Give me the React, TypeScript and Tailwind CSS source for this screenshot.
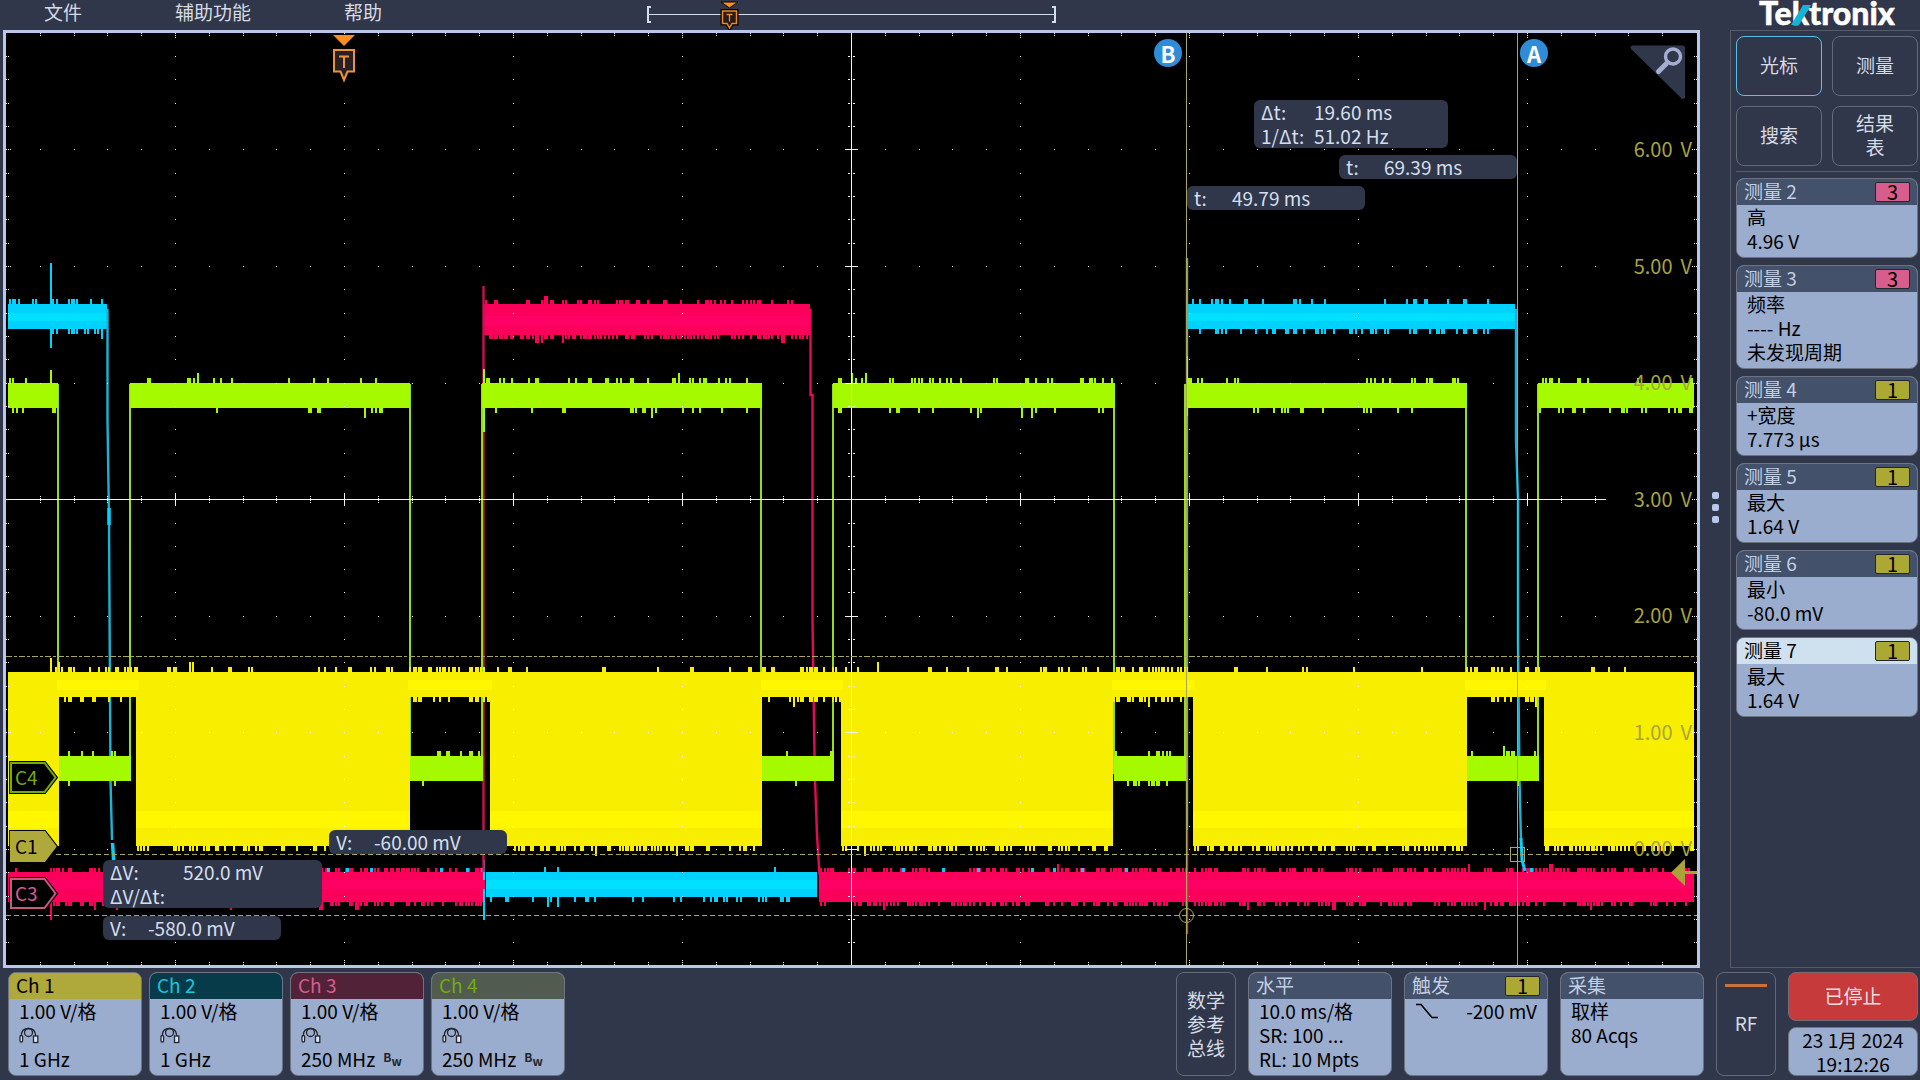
import type { CSSProperties, ReactNode } from "react";

/* ---------- plot geometry: view box shared by the drawing and its overlays ---------- */
const VX = 6;
const VY = 33;
const VW = 1691;
const VH = 932;

const at = (x: number, y: number): CSSProperties => ({
  left: `${((x - VX) / VW) * 100}%`,
  top: `${((y - VY) / VH) * 100}%`,
});

/* Small deterministic generator, so the noise is stable between renders. */
function rng(seed: number) {
  let s = seed * 7919 + 17;
  return () => {
    s = (s * 1103515245 + 12345) % 2147483648;
    return s / 2147483648;
  };
}

/* A noisy trace band: a filled strip with short spikes on both sides. */
function band(x0: number, x1: number, top: number, bottom: number, seed: number, up: number, down: number, spike = 5) {
  const r = rng(seed);
  let d = `M${x0} ${top}H${x1}V${bottom}H${x0}Z`;
  let x = x0 + 1;
  while (x < x1 - 3) {
    const w = r() < 0.7 ? 2 : 4;
    if (r() < up) {
      const h = r() < 0.03 ? spike * 2 : spike;
      d += `M${x} ${top - h}h${w}v${h}h${-w}z`;
    }
    if (r() < down) {
      const h = r() < 0.04 ? spike * 2 : spike;
      d += `M${x} ${bottom}h${w}v${h}h${-w}z`;
    }
    x += w + (r() < 0.5 ? 1 : 2);
  }
  return d;
}

function graticule() {
  const dot = (x: number, y: number, w = 1, h = 1) => `M${x} ${y}h${w}v${h}h${-w}z`;
  let d = "";
  for (let i = 1; i < 50; i++) {
    const x = Math.round(6 + 33.8 * i);
    const major = i % 5 === 0;
    for (const o of major ? [0, 2, 4] : [0, 2]) d += dot(x, 33 + o) + dot(x, 964 - o);
    if (x > 1606) continue;
    for (let j = 1; j < 8; j++) d += dot(x, Math.round(32.8 + 116.6 * j));
    d += major ? dot(x, 493, 1, 13) : dot(x, 496) + dot(x, 498) + dot(x, 500) + dot(x, 502);
  }
  for (let j = 1; j < 40; j++) {
    const y = Math.round(32.8 + 23.32 * j);
    const major = j % 5 === 0;
    for (let i = 1; i < 10; i++) d += dot(6 + 169 * i, y);
    d += major ? dot(845, y, 13) : dot(848, y, 2) + dot(853, y, 2);
    for (const o of major ? [0, 2, 4] : [0, 2]) d += dot(6 + o, y) + dot(1696 - o, y);
  }
  return d;
}

const highC4 = [[8, 58], [130, 410], [482, 762], [833, 1115], [1187, 1467], [1538, 1694]];
const lowC4 = [[59, 131], [410, 483], [762, 834], [1114, 1186], [1467, 1539]];
const edgesC4 = [58, 130, 410, 482, 761, 833, 1114, 1185, 1466, 1538];
const burstsC1 = [[8, 59], [136, 410], [490, 762], [841, 1113], [1193, 1467], [1544, 1694]];
const gapsC1 = [[57, 139], [408, 492], [761, 843], [1112, 1195], [1465, 1546]];
const specks = [327, 346, 370, 440, 466, 481, 902, 942, 977, 1031, 1053, 1081, 1125, 1530];

function Waveforms() {
  return (
    <svg
      className="absolute inset-0 h-full w-full"
      viewBox={`${VX} ${VY} ${VW} ${VH}`}
      preserveAspectRatio="none"
      aria-label="波形"
    >
      <g shapeRendering="crispEdges">
        {/* channel 3 */}
        <g fill="#fb005b">
          <path d={band(484, 810, 304, 335, 3, 0.45, 0.75, 4)} />
          <path d={band(8, 485, 872, 902, 4, 0.6, 0.65, 4)} />
          <path d={band(819, 1694, 872, 902, 5, 0.6, 0.6, 4)} />
          <path d="M50 900h2v20h-2z" />
        </g>
        {/* channel 2 */}
        <g fill="#00d2fd">
          <path d={band(8, 107, 304, 329, 1, 0.35, 0.25)} />
          <path d={band(1188, 1515, 304, 329, 2, 0.2, 0.35)} />
          <path d={band(486, 817, 872, 897, 6, 0.08, 0.3)} />
          <path d="M50 263h2v85h-2zM483 860h2v60h-2z" />
          {specks.map((x) => (
            <rect key={x} x={x} y={868} width={3} height={4} />
          ))}
        </g>
        <g fill="#00e0ff">
          <path d="M8 313h99v8H8zM1188 313h327v8h-327zM486 880h331v9H486z" />
        </g>
        <g fill="#ff0064">
          <path d="M485 316h325v10H485zM8 880h477v9H8zM819 880h875v9H819z" />
        </g>
      </g>
      {/* channel 2 and 3 transitions */}
      <g fill="none" strokeWidth={2.4}>
        <path stroke="#18b4d6" d="M107.500 309V420L109 520L110.500 780L112 840" />
        <path stroke="#00d2fd" strokeWidth={3.5} d="M112.500 843L114 866M109 508V525" />
        <path stroke="#18b4d6" d="M1516 309V440L1518 500V640L1519.500 780L1521 840" />
        <path stroke="#00d2fd" strokeWidth={3} d="M1521 838L1522 860L1525 871" />
        <path stroke="#c9114f" d="M483.500 286V872" />
        <path stroke="#e40a57" d="M810.500 309V395L812.500 395V620L814 725L815 780L817 835L819.500 875" />
        <path stroke="#4fb59a" d="M1187 258V830" />
        <path stroke="#cf3a45" d="M1187 830V934" />
      </g>
      <g shapeRendering="crispEdges">
        {/* channel 4 */}
        <g fill="#95dc1c">
          {edgesC4.map((x) => (
            <rect key={x} x={x - 1} y={384} width={2} height={390} />
          ))}
        </g>
        <g fill="#a6fa00">
          {highC4.map(([a, b], i) => (
            <path key={a} d={band(a, b, 383, 408, 20 + i, 0.25, 0.2)} />
          ))}
          {lowC4.map(([a, b], i) => (
            <path key={a} d={band(a, b, 756, 781, 30 + i, 0.3, 0.15)} />
          ))}
          <path d="M50 370h2v14h-2zM483 369h2v63h-2zM1186 356h2v60h-2z" />
        </g>
        {/* channel 1 */}
        <g fill="#f8ef00">
          {burstsC1.map(([a, b], i) => (
            <path key={a} d={band(a, b, 672, 846, 40 + i, 0.15, 0.6)} />
          ))}
          {gapsC1.map(([a, b], i) => (
            <path key={a} d={band(a, b, 672, 697, 50 + i, 0.6, 0.5)} />
          ))}
          <path d="M50 658h2v14h-2z" />
        </g>
        <g fill="#fff700">
          {gapsC1.map(([a, b]) => (
            <rect key={a} x={a} y={680} width={b - a} height={10} />
          ))}
          {burstsC1.map(([a, b]) => (
            <rect key={a} x={a} y={811} width={b - a} height={17} />
          ))}
        </g>
        {/* graticule */}
        <path fill="#f3f3f3" d={graticule()} />
        <path fill="#f3f3f3" d="M851 33h1v932h-1zM6 499h1600v1H6z" />
        {/* measurement and cursor lines */}
        <g stroke="#aaa560" strokeWidth={1} fill="none">
          <path strokeDasharray="6 2 3 2" d="M6 656.500H1697" />
          <path strokeDasharray="5 3" d="M56 854.500H1604" />
          <path strokeDasharray="5 3" d="M6 915.500H1697" />
          <path d="M1186.500 33V965M1517.500 33V965" />
          <path d="M1510.500 847.500h14v14h-14z" />
        </g>
      </g>
      <circle cx={1186.500} cy={915.500} r={7} fill="none" stroke="#aaa560" />
      {/* trigger level arrow */}
      <path fill="#aaa238" d="M1671 872.500L1685 859V871H1697V874H1685V886Z" />
      {/* trigger position */}
      <path fill="#f88d23" d="M333 35H355L344 46Z" />
      <path fill="#261f24" stroke="#ea9338" strokeWidth={2} d="M334 50H354V71.500H347.500L344 80L340.500 71.500H334Z" />
      <path fill="none" stroke="#ea9338" strokeWidth={2} d="M339 56.500H349M344 56V68" />
      {/* zoom corner */}
      <path fill="#31374a" stroke="#31374a" strokeWidth={4} strokeLinejoin="round" d="M1632.500 47.500H1683V97Z" />
      <circle cx={1673} cy={56.500} r={7.500} fill="none" stroke="#a3aed2" strokeWidth={3.400} />
      <path stroke="#a3aed2" strokeWidth={5} strokeLinecap="round" d="M1666.500 63.500L1658.500 71.500" />
    </svg>
  );
}

/* ---------- overlays ---------- */
function Readout({ x, y, className, children }: { x: number; y: number; className: string; children: ReactNode }) {
  return (
    <div
      className={`absolute rounded-md bg-[#31374a] px-[7px] text-[19px] leading-6 whitespace-nowrap text-[#d3dfee] ${className}`}
      style={at(x, y)}
    >
      {children}
    </div>
  );
}

function Row({ label, value, w = "w-[38px]" }: { label: string; value: string; w?: string }) {
  return (
    <div className="flex">
      <span className={w}>{label}</span>
      <span>{value}</span>
    </div>
  );
}

function CursorBadge({ x, name }: { x: number; name: string }) {
  return (
    <button
      className="absolute flex size-7 items-center justify-center rounded-full bg-[#2f8dd8] text-[22px] leading-7 font-bold text-white"
      style={at(x, 39)}
    >
      {name}
    </button>
  );
}

function Handle({ y, name, fill, stroke, color }: { y: number; name: string; fill: string; stroke: string; color: string }) {
  return (
    <div className="absolute flex h-8 w-12 items-center pl-[6px] text-[19px]" style={at(9, y)}>
      <svg className="absolute inset-0" width="49" height="33" viewBox="0 0 49 33" aria-hidden="true">
        <path d="M1 1H36L48 16.500L36 32H1Z" fill={fill} stroke="#000" strokeWidth="2" />
        <path d="M2 2H35.500L46.500 16.500L35.500 31H2Z" fill={fill} stroke={stroke} strokeWidth="2" />
      </svg>
      <span className={`relative leading-8 ${color}`}>{name}</span>
    </div>
  );
}

const axis = [
  { v: "6.00", y: 149 },
  { v: "5.00", y: 266 },
  { v: "4.00", y: 382 },
  { v: "3.00", y: 499 },
  { v: "2.00", y: 615 },
  { v: "1.00", y: 732 },
  { v: "0.00", y: 848 },
];

/* ---------- side panel ---------- */
function PanelButton({ children, active }: { children: ReactNode; active?: boolean }) {
  return (
    <button
      className={`flex h-[60px] items-center justify-center rounded-lg border pb-0.5 text-[19px] leading-6 text-[#d6dbe4] ${
        active ? "border-[#5cbfe6]" : "border-[#646a74]"
      }`}
    >
      {children}
    </button>
  );
}

function Source({ n }: { n: number }) {
  return (
    <span
      className={`flex h-5 w-[35px] items-center justify-center rounded-xs border border-[#23262e] text-xl leading-5 text-black ${
        n === 3 ? "bg-[#d75d8c]" : "bg-[#aba933]"
      }`}
    >
      {n}
    </span>
  );
}

const measurements = [
  { title: "测量 2", src: 3, lines: ["高", "4.96 V"] },
  { title: "测量 3", src: 3, lines: ["频率", "---- Hz", "未发现周期"] },
  { title: "测量 4", src: 1, lines: ["+宽度", "7.773 µs"] },
  { title: "测量 5", src: 1, lines: ["最大", "1.64 V"] },
  { title: "测量 6", src: 1, lines: ["最小", "-80.0 mV"] },
  { title: "测量 7", src: 1, lines: ["最大", "1.64 V"], selected: true },
];

function Measurement({ title, src, lines, selected }: { title: string; src: number; lines: string[]; selected?: boolean }) {
  return (
    <button className="block w-full overflow-hidden rounded-lg border border-[#6d747f] bg-[#9badce] text-left text-[19px] text-black">
      <span
        className={`flex h-[26px] items-start justify-between px-[7px] leading-6 ${
          selected ? "bg-[#cfe0ef] text-black" : "bg-[#44516a] text-[#c3cfe4]"
        }`}
      >
        {title}
        <span className="pt-[3px]">
          <Source n={src} />
        </span>
      </span>
      <span className="block pb-1 pl-2.5">
        {lines.map((l) => (
          <span key={l} className="block leading-6">
            {l}
          </span>
        ))}
      </span>
    </button>
  );
}

/* ---------- bottom bar ---------- */
function ProbeIcon() {
  return (
    <svg width="20" height="17" viewBox="0 0 20 17" fill="none" stroke="#23262e" strokeWidth="1.300" aria-hidden="true">
      <rect x="1" y="8.500" width="2.600" height="6.500" rx="1.300" fill="#dfe6f2" />
      <path d="M2.300 8.500C2.300 3 5 1.500 9.500 1.500S16.500 3.500 16.700 9" />
      <circle cx="9.500" cy="5.500" r="4" />
      <rect x="14.500" y="9" width="4.300" height="6.500" fill="#dfe6f2" />
    </svg>
  );
}

const channels = [
  { name: "Ch 1", head: "bg-[#aea93a] text-black", bw: "1 GHz", limit: false },
  { name: "Ch 2", head: "bg-[#083b49] text-[#1ec3de]", bw: "1 GHz", limit: false },
  { name: "Ch 3", head: "bg-[#522338] text-[#d75d8c]", bw: "250 MHz", limit: true },
  { name: "Ch 4", head: "bg-[#515b50] text-[#74ac10]", bw: "250 MHz", limit: true },
];

function Card({ width, head, headClass, children }: { width: string; head: ReactNode; headClass: string; children: ReactNode }) {
  return (
    <button
      className={`flex flex-col overflow-hidden rounded-lg border border-[#6d747f] bg-[#9badce] text-left text-[19px] text-black ${width}`}
    >
      <span className={`flex h-[26px] w-full shrink-0 items-start justify-between px-[7px] leading-6 ${headClass}`}>{head}</span>
      <span className="block w-full pr-2.5 pl-[10px] leading-6 whitespace-nowrap">{children}</span>
    </button>
  );
}

const blueHead = "bg-[#44516a] text-[#c3cfe4]";

export default function App() {
  return (
    <div className="flex min-h-screen flex-col overflow-hidden bg-[#31374a] font-['Noto_Sans_CJK_SC',sans-serif]">
      <header className="flex h-[30px] shrink-0 items-start text-[19px] leading-6 text-[#d6dbe4]">
        <nav className="flex gap-[93px] pl-11">
          <button>文件</button>
          <button>辅助功能</button>
          <button>帮助</button>
        </nav>
        <svg className="ml-[265px]" width="410" height="30" viewBox="0 0 410 30" fill="none" aria-label="采集预览">
          <g shapeRendering="crispEdges" fill="#cfe0ef">
            <path d="M0 6h4v2H2v13h2v2H0zM409 6h-4v2h2v13h-2v2h4z" />
            <path d="M2 14h405v1H2z" />
          </g>
          <path d="M74 2H91L82.500 8Z" fill="#f88d23" stroke="#000" />
          <path d="M75.500 11H89.500V23.500H85L82.500 28L80 23.500H75.500Z" fill="#2b1a16" stroke="#000" strokeWidth="4" />
          <path d="M75.500 11H89.500V23.500H85L82.500 28L80 23.500H75.500Z" fill="#2b1a16" stroke="#ea8a2c" strokeWidth="1.500" />
          <path d="M79.500 14.500H85.500M82.500 14.500V21.500" stroke="#ea8a2c" strokeWidth="1.300" />
        </svg>
        <svg className="mr-5 ml-auto" width="142" height="30" viewBox="0 0 142 30" aria-label="Tektronix">
          <text x="1" y="25" fill="#fff" stroke="#fff" strokeWidth="0.500" fontSize="32" fontWeight="900" fontFamily="Lato">
            Tektronix
          </text>
          <path d="M45 5H53L41 25H33Z" fill="#16b3d8" />
        </svg>
      </header>

      <main className="flex flex-1">
        <section className="relative ml-[3px] flex-1 border-[3px] border-[#b9c8ea] bg-black" aria-label="示波器显示">
          <div className="absolute inset-0 overflow-hidden">
            <Waveforms />
            <div className="text-xl leading-6 whitespace-nowrap text-[#a9a440]">
              {axis.map((a) => (
                <span key={a.v} className="absolute flex -translate-x-full -translate-y-1/2 gap-2" style={at(1692, a.y)}>
                  <span>{a.v}</span>
                  <span>V</span>
                </span>
              ))}
            </div>
            <CursorBadge x={1154} name="B" />
            <CursorBadge x={1520} name="A" />
            <Readout x={1254} y={100} className="w-[194px]">
              <Row label="Δt:" value="19.60 ms" w="w-[53px]" />
              <Row label="1/Δt:" value="51.02 Hz" w="w-[53px]" />
            </Readout>
            <Readout x={1339} y={155} className="w-[178px]">
              <Row label="t:" value="69.39 ms" />
            </Readout>
            <Readout x={1187} y={186} className="w-[178px]">
              <Row label="t:" value="49.79 ms" />
            </Readout>
            <Readout x={329} y={830} className="w-[178px]">
              <Row label="V:" value="-60.00 mV" />
            </Readout>
            <Readout x={103} y={860} className="w-[219px]">
              <Row label="ΔV:" value="520.0 mV" w="w-[73px]" />
              <Row label="ΔV/Δt:" value="" w="w-[73px]" />
            </Readout>
            <Readout x={103} y={916} className="w-[178px]">
              <Row label="V:" value="-580.0 mV" />
            </Readout>
            <Handle y={761} name="C4" fill="#000" stroke="#74ac10" color="text-[#74ac10]" />
            <Handle y={830} name="C1" fill="#aea93a" stroke="#aea93a" color="text-black" />
            <Handle y={877} name="C3" fill="#000" stroke="#c9587f" color="text-[#d75d8c]" />
          </div>
        </section>

        <button className="flex w-[30px] flex-col items-center justify-center gap-[5px] pt-4" aria-label="展开面板">
          <span className="size-[7px] rounded-xs bg-[#b9c8ea]" />
          <span className="size-[7px] rounded-xs bg-[#b9c8ea]" />
          <span className="size-[7px] rounded-xs bg-[#b9c8ea]" />
        </button>

        <aside className="w-[190px] border-t border-b border-l border-[#565b66] pt-[5px] pr-0.5 pl-[5px]">
          <div className="grid grid-cols-2 gap-[10px] border-b border-[#565b66] pb-[5px]">
            <PanelButton active>光标</PanelButton>
            <PanelButton>测量</PanelButton>
            <PanelButton>搜索</PanelButton>
            <PanelButton>
              结果
              <br />表
            </PanelButton>
          </div>
          <div className="flex flex-col gap-[7px] pt-1.5">
            {measurements.map((m) => (
              <Measurement key={m.title} {...m} />
            ))}
          </div>
        </aside>
      </main>

      <footer className="flex h-[112px] shrink-0 justify-between pt-1 pr-0.5 pb-1 pl-2">
        <div className="flex gap-[7px]">
          {channels.map((c) => (
            <Card key={c.name} width="w-[134px]" head={c.name} headClass={c.head}>
              1.00 V/格
              <span className="flex h-6 items-center">
                <ProbeIcon />
              </span>
              <span className="flex items-center gap-2">
                {c.bw}
                {c.limit && (
                  <span className="flex text-xs leading-5 font-bold text-[#23262e]">
                    B<span className="pt-1">w</span>
                  </span>
                )}
              </span>
            </Card>
          ))}
        </div>
        <div className="flex gap-3">
          <button className="w-[60px] rounded-lg border border-[#646a74] text-[19px] leading-6 text-[#d6dbe4]">
            数学
            <br />
            参考
            <br />
            总线
          </button>
          <Card width="w-36" head="水平" headClass={blueHead}>
            10.0 ms/格
            <br />
            SR: 100 ...
            <br />
            RL: 10 Mpts
          </Card>
          <Card
            width="w-36"
            head={
              <>
                触发
                <span className="pt-[3px]">
                  <Source n={1} />
                </span>
              </>
            }
            headClass={blueHead}
          >
            <span className="flex items-center justify-between">
              <svg width="24" height="16" viewBox="0 0 24 16" fill="none" stroke="#000" strokeWidth="1.600" aria-hidden="true">
                <path d="M1 1.500H6L17 14.500H23" />
              </svg>
              -200 mV
            </span>
          </Card>
          <Card width="w-36" head="采集" headClass={blueHead}>
            取样
            <br />
            80 Acqs
          </Card>
          <button className="flex w-[60px] flex-col items-center rounded-lg border border-[#646a74] pt-[11px] text-[19px] leading-6 text-[#d6dbe4]">
            <span className="h-[3px] w-[42px] bg-[#cc7238]" />
            <span className="pt-6">RF</span>
          </button>
          <div className="flex w-[130px] flex-col gap-1.5 text-[19px]">
            <button className="flex-1 rounded-lg border border-[#7b6a72] bg-[#c63a3b] pb-0.5 leading-6 text-[#f0dfe2]">已停止</button>
            <button className="h-[49px] rounded-lg border border-[#6d747f] bg-[#9badce] pb-1 leading-6 whitespace-nowrap text-black">
              23 1月 2024
              <br />
              19:12:26
            </button>
          </div>
        </div>
      </footer>
    </div>
  );
}
